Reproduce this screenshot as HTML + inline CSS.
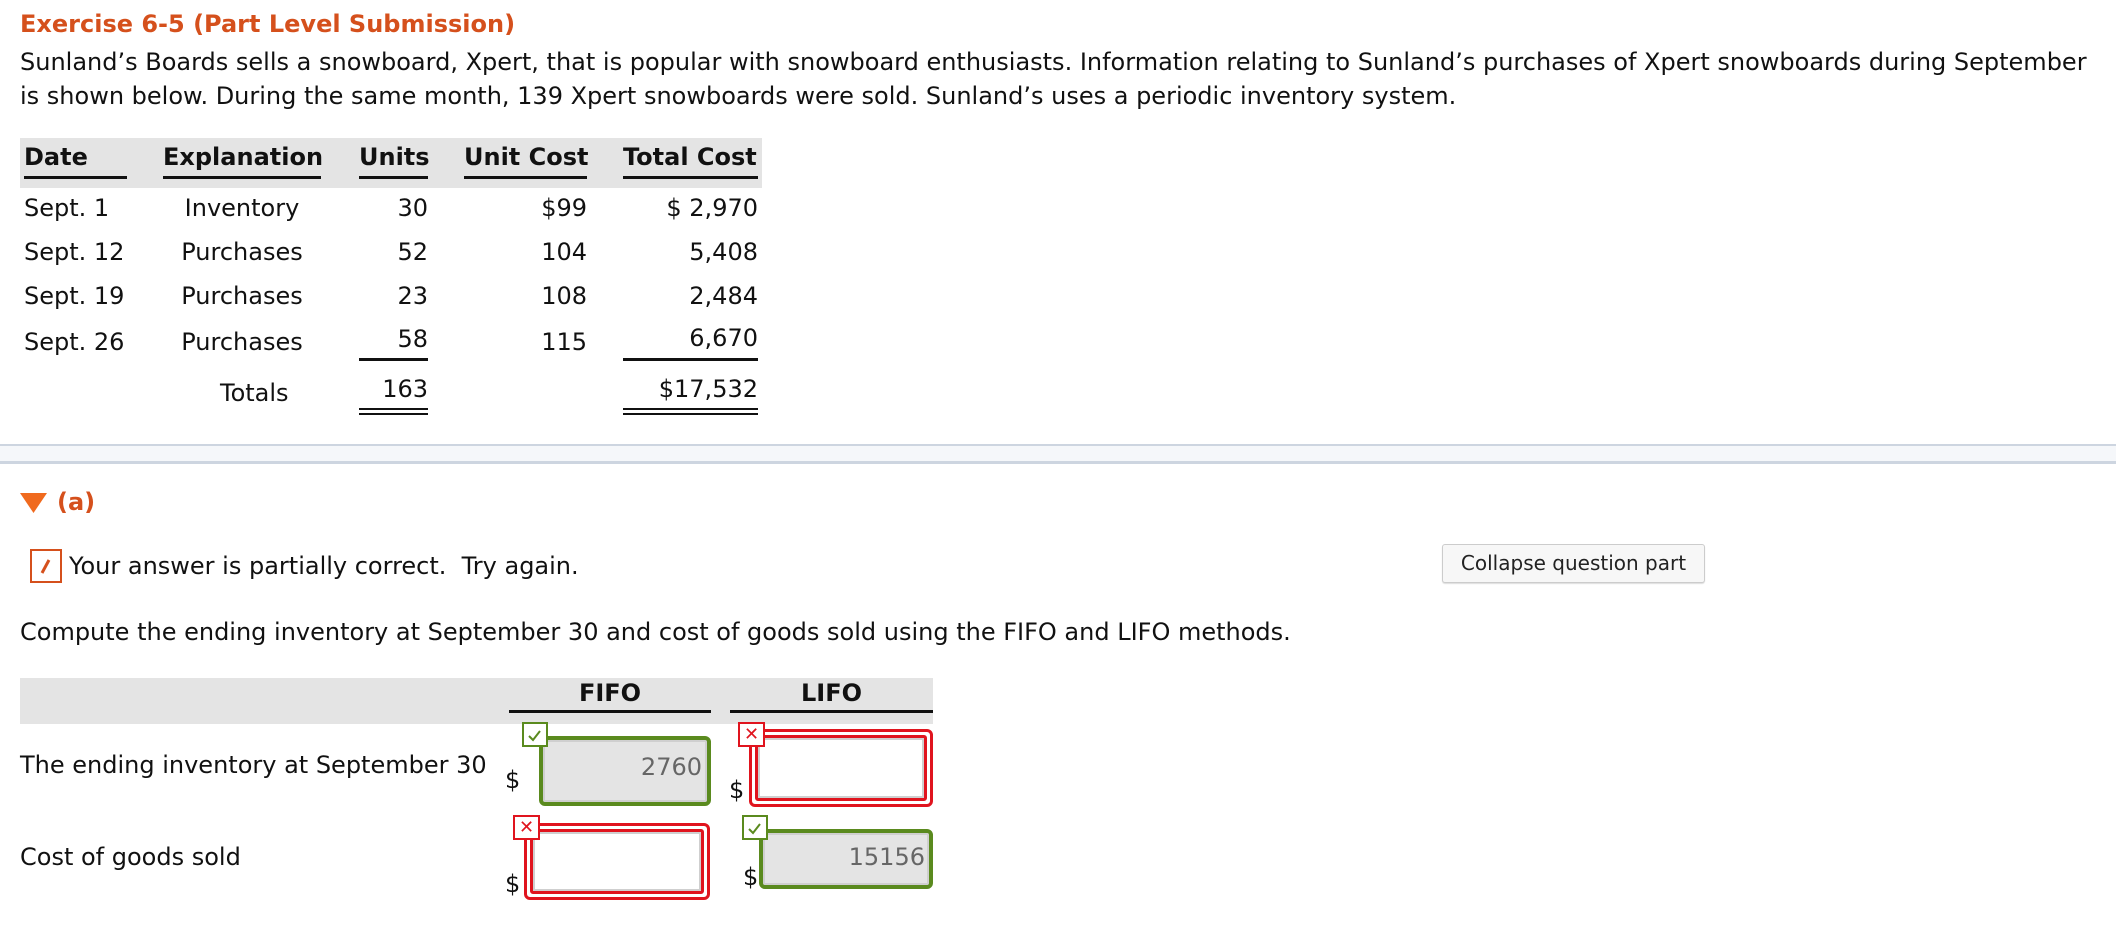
<!DOCTYPE html>
<html><head><meta charset="utf-8">
<style>
*{margin:0;padding:0;box-sizing:border-box}
body{width:2116px;height:926px;background:#fff;font-family:"DejaVu Sans","Liberation Sans",sans-serif;font-size:24px;color:#111;position:relative;overflow:hidden}
.a{position:absolute;white-space:nowrap;line-height:1}
.b{font-weight:bold}
.r{text-align:right}
.c{text-align:center}
.ul{position:absolute;height:3px;background:#111}
.chk{position:absolute;width:26px;height:25px;background:#fff;border:2px solid #5a8a1e;z-index:3}
.xx{position:absolute;width:27px;height:25px;background:#fff;border:2px solid #e0141e;z-index:3;color:#e0141e;font-weight:bold;font-size:18px;text-align:center;line-height:21px}
.gbox{position:absolute;border:4px solid #5a8a1e;border-radius:6px;background:#e4e4e4;box-shadow:inset 0 0 0 2px #cfcfcf}
.rbox{position:absolute;border:3px solid #e0141e;border-radius:6px;background:#fff;padding:3px}
.rbox div{width:100%;height:100%;border:3px solid #e0141e;border-radius:3px;box-shadow:inset 0 0 0 2px #cfcfcf}
</style></head><body>
<div class="a b" style="left:20px;top:12px;color:#d5501c;font-size:24px">Exercise 6-5 (Part Level Submission)</div>
<div class="a" style="left:20px;top:50px">Sunland’s Boards sells a snowboard, Xpert, that is popular with snowboard enthusiasts. Information relating to Sunland’s purchases of Xpert snowboards during September</div>
<div class="a" style="left:20px;top:84px">is shown below. During the same month, 139 Xpert snowboards were sold. Sunland’s uses a periodic inventory system.</div>

<div style="position:absolute;left:20px;top:138px;width:742px;height:50px;background:#e4e4e4"></div>
<div class="a b" style="left:24px;top:145px">Date</div>
<div class="a b" style="left:163px;top:145px">Explanation</div>
<div class="a b" style="left:359px;top:145px">Units</div>
<div class="a b" style="left:464px;top:145px">Unit Cost</div>
<div class="a b" style="left:623px;top:145px">Total Cost</div>
<div class="ul" style="left:24px;top:176px;width:103px"></div>
<div class="ul" style="left:163px;top:176px;width:158px"></div>
<div class="ul" style="left:359px;top:176px;width:69px"></div>
<div class="ul" style="left:464px;top:176px;width:123px"></div>
<div class="ul" style="left:623px;top:176px;width:135px"></div>

<div class="a" style="left:24px;top:196px">Sept. 1</div>
<div class="a" style="left:24px;top:240px">Sept. 12</div>
<div class="a" style="left:24px;top:284px">Sept. 19</div>
<div class="a" style="left:24px;top:330px">Sept. 26</div>
<div class="a c" style="left:163px;width:158px;top:196px">Inventory</div>
<div class="a c" style="left:163px;width:158px;top:240px">Purchases</div>
<div class="a c" style="left:163px;width:158px;top:284px">Purchases</div>
<div class="a c" style="left:163px;width:158px;top:330px">Purchases</div>
<div class="a r" style="left:330px;width:98px;top:196px">30</div>
<div class="a r" style="left:330px;width:98px;top:240px">52</div>
<div class="a r" style="left:330px;width:98px;top:284px">23</div>
<div class="a r" style="left:330px;width:98px;top:327px">58</div>
<div class="a r" style="left:460px;width:127px;top:196px">$99</div>
<div class="a r" style="left:460px;width:127px;top:240px">104</div>
<div class="a r" style="left:460px;width:127px;top:284px">108</div>
<div class="a r" style="left:460px;width:127px;top:330px">115</div>
<div class="a r" style="left:600px;width:158px;top:196px">$ 2,970</div>
<div class="a r" style="left:600px;width:158px;top:240px">5,408</div>
<div class="a r" style="left:600px;width:158px;top:284px">2,484</div>
<div class="a r" style="left:600px;width:158px;top:326px">6,670</div>
<div class="ul" style="left:359px;top:358px;width:69px"></div>
<div class="ul" style="left:623px;top:358px;width:135px"></div>
<div class="a" style="left:220px;top:381px">Totals</div>
<div class="a r" style="left:330px;width:98px;top:377px">163</div>
<div class="a r" style="left:600px;width:158px;top:377px">$17,532</div>
<div class="ul" style="left:359px;top:408px;width:69px;height:2px"></div>
<div class="ul" style="left:359px;top:413px;width:69px;height:2px"></div>
<div class="ul" style="left:623px;top:408px;width:135px;height:2px"></div>
<div class="ul" style="left:623px;top:413px;width:135px;height:2px"></div>

<div style="position:absolute;left:0;top:444px;width:2116px;height:20px;background:#f5f7fa;border-top:2px solid #cdd5e0;border-bottom:3px solid #cdd5e0"></div>

<svg style="position:absolute;left:20px;top:493px" width="27" height="20"><polygon points="0,0 27,0 13.5,20" fill="#f06a1e"/></svg>
<div class="a b" style="left:57px;top:490px;color:#d5501c;font-size:24px">(a)</div>

<div style="position:absolute;left:30px;top:549px;width:32px;height:34px;border:2px solid #d5501c;background:#fff"></div>
<svg style="position:absolute;left:30px;top:549px" width="32" height="34"><line x1="12" y1="24" x2="19" y2="11" stroke="#d5501c" stroke-width="3"/></svg>
<div class="a" style="left:69px;top:554px">Your answer is partially correct.&nbsp; Try again.</div>

<div style="position:absolute;left:1442px;top:544px;width:263px;height:39px;border:1px solid #ccc;border-radius:3px;background:#f7f7f7;font-size:20px;line-height:37px;text-align:center;color:#222;box-shadow:0 1px 1px #ddd">Collapse question part</div>

<div class="a" style="left:20px;top:620px">Compute the ending inventory at September 30 and cost of goods sold using the FIFO and LIFO methods.</div>

<div style="position:absolute;left:20px;top:678px;width:913px;height:46px;background:#e4e4e4"></div>
<div class="a b c" style="left:509px;width:202px;top:681px">FIFO</div>
<div class="a b c" style="left:730px;width:203px;top:681px">LIFO</div>
<div class="ul" style="left:509px;top:710px;width:202px"></div>
<div class="ul" style="left:730px;top:710px;width:203px"></div>

<div class="a" style="left:20px;top:753px">The ending inventory at September 30</div>
<div class="a" style="left:20px;top:845px">Cost of goods sold</div>

<div class="chk" style="left:522px;top:722px"><svg width="22" height="21"><polyline points="5,11 9,15 16,6" fill="none" stroke="#5a8a1e" stroke-width="2"/></svg></div>
<div class="gbox" style="left:539px;top:736px;width:172px;height:70px"></div>
<div class="a r" style="left:560px;width:142px;top:755px;color:#666">2760</div>
<div class="a" style="left:505px;top:768px">$</div>

<div class="xx" style="left:738px;top:722px">✕</div>
<div class="rbox" style="left:749px;top:729px;width:184px;height:78px"><div></div></div>
<div class="a" style="left:729px;top:778px">$</div>

<div class="xx" style="left:513px;top:815px">✕</div>
<div class="rbox" style="left:524px;top:823px;width:186px;height:77px"><div></div></div>
<div class="a" style="left:505px;top:872px">$</div>

<div class="chk" style="left:742px;top:815px"><svg width="22" height="21"><polyline points="5,11 9,15 16,6" fill="none" stroke="#5a8a1e" stroke-width="2"/></svg></div>
<div class="gbox" style="left:759px;top:829px;width:174px;height:60px"></div>
<div class="a r" style="left:780px;width:145px;top:845px;color:#666">15156</div>
<div class="a" style="left:743px;top:865px">$</div>
</body></html>
